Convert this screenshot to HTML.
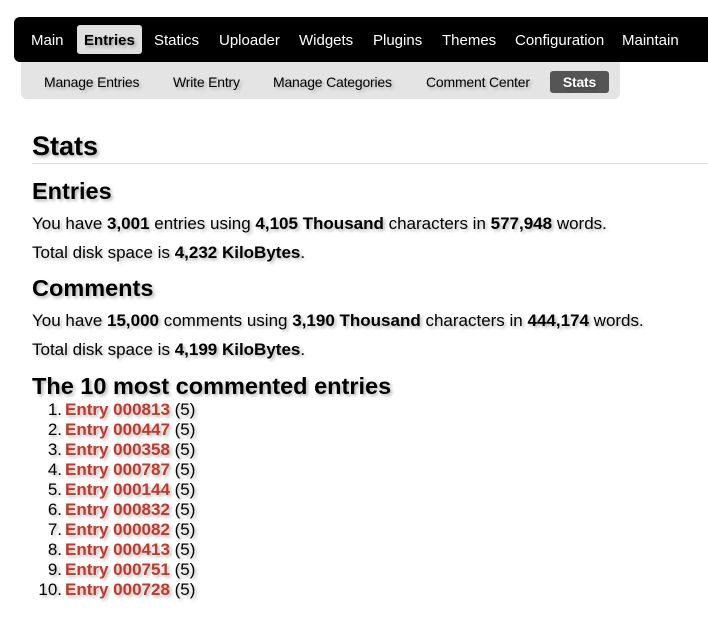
<!DOCTYPE html>
<html><head><style>
body{margin:0;width:708px;height:620px;overflow:hidden;background:#fff;font-family:"Liberation Sans",Arial,sans-serif;color:#000;position:relative}
.sh{text-shadow:2px 2px 3px rgba(0,0,0,.3)}
.top{position:absolute;left:14px;top:17px;width:700px;height:45px;background:#000;border-radius:6px 0 0 6px}
.top span{position:absolute;top:1px;line-height:45px;color:#fff;font-size:15px}
.top .act{background:#e0e0e0;color:#000;font-weight:bold;top:8px;height:29px;line-height:31px;border-radius:3px;padding:0 7px;text-shadow:2px 2px 3px rgba(0,0,0,.3)}
.sub{position:absolute;left:21px;top:62px;width:599px;height:37px;background:#e4e4e4;border-radius:0 0 6px 6px}
.sub span{position:absolute;top:1px;line-height:39px;font-size:14px;color:#000;text-shadow:2px 2px 3px rgba(0,0,0,.25);letter-spacing:-0.2px}
.sub .act{background:#555;color:#fff;font-weight:bold;top:9px;height:22px;line-height:22px;width:59px;text-align:center;border-radius:3px}
.t{position:absolute;left:32px;white-space:nowrap}
h1,h2{margin:0;font-weight:bold}
.p{font-size:17px}
ol{position:absolute;left:0;top:399px;margin:0;padding:0;list-style:none;font-size:17px}
ol li{height:20px;line-height:22px;position:relative}
ol li .n{display:inline-block;width:62px;text-align:right;margin-right:3px}
a{color:#c0392b;font-weight:bold;text-decoration:none}
</style></head><body>
<div class="top">
<span style="left:17px">Main</span>
<span class="act" style="left:63px">Entries</span>
<span style="left:140px">Statics</span>
<span style="left:205px">Uploader</span>
<span style="left:285px">Widgets</span>
<span style="left:359px">Plugins</span>
<span style="left:428px">Themes</span>
<span style="left:501px">Configuration</span>
<span style="left:608px">Maintain</span>
</div>
<div class="sub">
<span style="left:23px">Manage Entries</span>
<span style="left:152px">Write Entry</span>
<span style="left:252px">Manage Categories</span>
<span style="left:405px">Comment Center</span>
<span class="act" style="left:529px">Stats</span>
</div>
<h1 class="t sh" style="top:131px;font-size:27px">Stats</h1>
<div style="position:absolute;left:32px;top:163px;width:676px;height:1px;background:#ddd"></div>
<h2 class="t sh" style="top:178px;font-size:23.5px">Entries</h2>
<div class="t p sh" style="top:214px">You have <b>3,001</b> entries using <b>4,105 Thousand</b> characters in <b>577,948</b> words.</div>
<div class="t p sh" style="top:243px">Total disk space is <b>4,232 KiloBytes</b>.</div>
<h2 class="t sh" style="top:275px;font-size:23.5px">Comments</h2>
<div class="t p sh" style="top:311px">You have <b>15,000</b> comments using <b>3,190 Thousand</b> characters in <b>444,174</b> words.</div>
<div class="t p sh" style="top:340px">Total disk space is <b>4,199 KiloBytes</b>.</div>
<h2 class="t sh" style="top:373px;font-size:23.5px">The 10 most commented entries</h2>
<ol class="sh">
<li><span class="n">1.</span><a>Entry 000813</a> (5)</li>
<li><span class="n">2.</span><a>Entry 000447</a> (5)</li>
<li><span class="n">3.</span><a>Entry 000358</a> (5)</li>
<li><span class="n">4.</span><a>Entry 000787</a> (5)</li>
<li><span class="n">5.</span><a>Entry 000144</a> (5)</li>
<li><span class="n">6.</span><a>Entry 000832</a> (5)</li>
<li><span class="n">7.</span><a>Entry 000082</a> (5)</li>
<li><span class="n">8.</span><a>Entry 000413</a> (5)</li>
<li><span class="n">9.</span><a>Entry 000751</a> (5)</li>
<li><span class="n">10.</span><a>Entry 000728</a> (5)</li>
</ol>
</body></html>
